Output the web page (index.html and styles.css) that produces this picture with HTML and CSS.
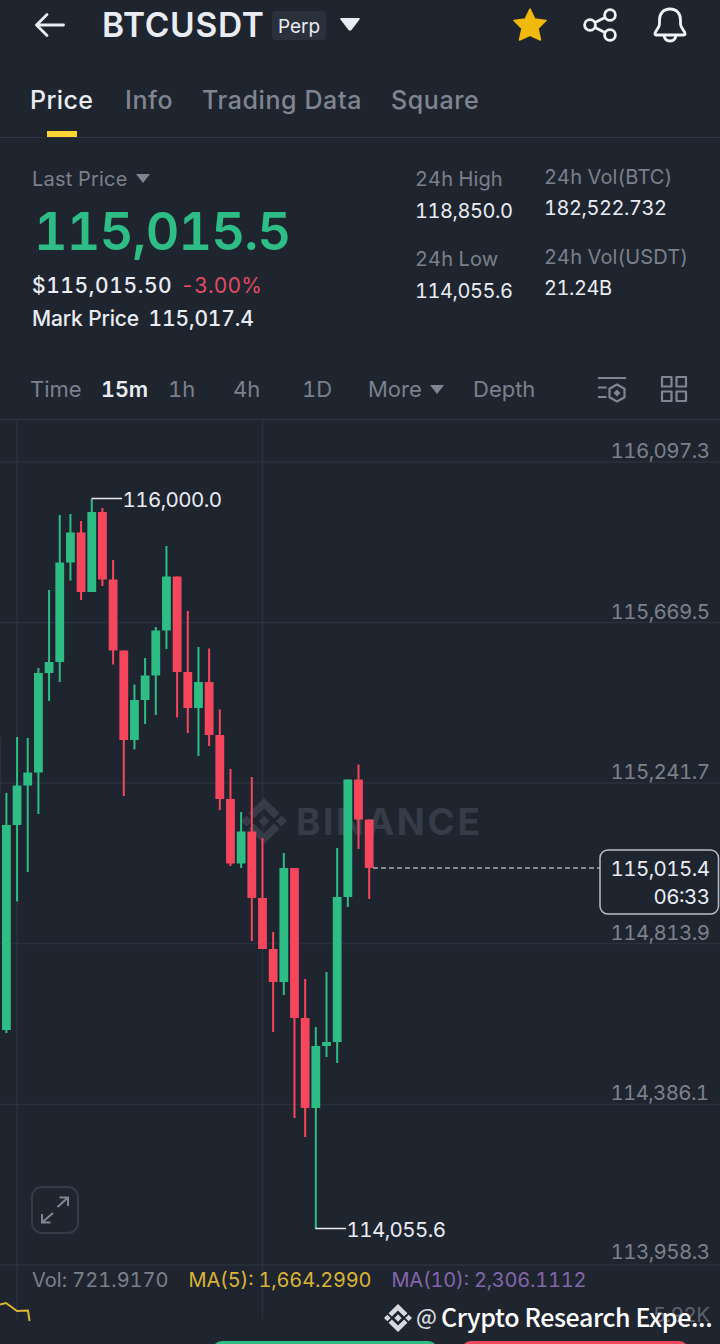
FILE: index.html
```html
<!DOCTYPE html>
<html lang="en">
<head>
    <meta charset="UTF-8">
    <meta name="viewport" content="width=device-width, initial-scale=1.0">
    <title>BTCUSDT Perp</title>
    <link rel="stylesheet" href="styles.css">
</head>
<body>
    <header class="header">
        <svg class="back" width="32" height="26" viewBox="0 0 32 26">
            <path d="M14 2.500 L3.500 13 L14 23.500 M3.500 13 H30.500" />
        </svg>
        <h1>BTCUSDT</h1>
        <span class="badge">Perp</span>
        <svg class="pair-arrow" width="22" height="14" viewBox="0 0 22 14">
            <path d="M2 0 H20 Q21.5 0 20.5 1.5 L12.5 12 Q11 13.5 9.500 12 L1.500 1.500 Q.5 0 2 0Z" />
        </svg>
        <div class="actions">
            <svg width="36" height="36" viewBox="0 0 36 36">
                <path class="star" d="M18 2 L22.800 12 L34 13.500 L26 21.500 L28.500 33 L18 28.200 L7.500 33 L10 21.500 L2 13.500 L13.200 12Z" />
            </svg>
            <svg class="line-icon" width="36" height="36" viewBox="0 0 36 36">
                <circle cx="8" cy="18" r="5.400" />
                <circle cx="28" cy="8" r="5.400" />
                <circle cx="28" cy="28" r="5.400" />
                <path d="M13 15.500 L23 10.500 M13 20.500 L23 25.500" />
            </svg>
            <svg class="line-icon" width="36" height="36" viewBox="0 0 36 36">
                <path d="M18 2 C11 2 7.500 7 7.500 13 V17 C7.500 21 3 23.500 3 27 Q3 28 4.500 28 H31.500 Q33 28 33 27 C33 23.500 28.500 21 28.500 17 V13 C28.500 7 25 2 18 2Z" />
                <path d="M12 28.500 Q13 34 18 34 Q23 34 24 28.500" />
            </svg>
        </div>
    </header>

    <nav class="tabs">
        <span class="tab active">Price</span>
        <span class="tab">Info</span>
        <span class="tab">Trading Data</span>
        <span class="tab">Square</span>
    </nav>

    <section class="summary">
        <div class="price">
            <div class="price-label">Last Price <i class="caret"></i></div>
            <div class="last">115,015.5</div>
            <div class="usd">$115,015.50 <span class="change">-3.00%</span></div>
            <div class="mark">Mark Price <span class="mark-value">115,017.4</span></div>
        </div>
        <dl class="stats">
            <dt>24h High</dt>
            <dd>118,850.0</dd>
            <dt>24h Low</dt>
            <dd>114,055.6</dd>
        </dl>
        <dl class="stats volume">
            <dt>24h Vol(BTC)</dt>
            <dd>182,522.732</dd>
            <dt>24h Vol(USDT)</dt>
            <dd>21.24B</dd>
        </dl>
    </section>

    <div class="intervals">
        <span>Time</span>
        <span class="selected">15m</span>
        <span>1h</span>
        <span>4h</span>
        <span>1D</span>
        <span class="more">More <i class="caret"></i></span>
        <span>Depth</span>
        <svg width="32" height="32" viewBox="0 0 32 32">
            <path d="M2 5 H30 M2 14.500 H10.500 M2 24 H10.500 M21 11.500 L28.500 15.800 V24.200 L21 28.500 L13.500 24.200 V15.800Z" />
            <path class="dot" d="M21 16.500 L24.500 20 L21 23.500 L17.500 20Z" />
        </svg>
        <svg width="32" height="32" viewBox="0 0 32 32">
            <path d="M4 4 H13.500 V13.500 H4Z M18.500 4 H28 V13.500 H18.500Z M4 18.500 H13.500 V28 H4Z M18.500 18.500 H28 V28 H18.500Z" />
        </svg>
    </div>

    <main class="chart">
        <svg width="720" height="924" viewBox="0 420 720 924">
            <g class="grid">
                <path d="M0 462 H720 M0 622.500 H720 M0 783 H720 M0 943.500 H720 M0 1104.500 H720 M0 1265 H720" />
                <path d="M17 420 V1319 M262.500 420 V1319 M.5 737 V793" />
            </g>
            <g class="brand">
                <path d="M264 798 L279.500 813 L274 818.500 L264 808.500 L254 818.500 L248.500 813Z" />
                <path d="M264 844 L279.500 829 L274 823.500 L264 833.500 L254 823.500 L248.500 829Z" />
                <path d="M264 815.500 L269.500 821 L264 826.500 L258.500 821Z M246.500 815.500 L252 821 L246.500 826.500 L241 821Z M281.500 815.500 L287 821 L281.500 826.500 L276 821Z" />
                <text x="296" y="835" textLength="184">BINANCE</text>
            </g>
            <g id="candles"></g>
            <path class="current" d="M373 868 H600" />
            <path class="pointer" d="M91.500 498.500 H122 M315.500 1228.500 H346" />
            <g class="extremes">
                <text x="122.500" y="507" textLength="99.500">116,000.0</text>
                <text x="346.500" y="1237" textLength="99.500">114,055.6</text>
            </g>
            <g class="axis">
                <text x="610.500" y="458" textLength="99.500">116,097.3</text>
                <text x="610.500" y="619" textLength="99.500">115,669.5</text>
                <text x="610.500" y="779" textLength="99.500">115,241.7</text>
                <text x="610.500" y="940" textLength="99.500">114,813.9</text>
                <text x="610.500" y="1100" textLength="98.500">114,386.1</text>
                <text x="610.500" y="1259" textLength="99.500">113,958.3</text>
                <text class="vol-max" x="653" y="1322" textLength="57">5.92K</text>
            </g>
            <rect class="tag" x="600" y="850" width="118.500" height="64" rx="8" />
            <g class="tag-text">
                <text x="610.500" y="876" textLength="99.500">115,015.4</text>
                <text x="653.500" y="904" textLength="56.500">06:33</text>
            </g>
            <g class="expand">
                <rect x="32" y="1187" width="46" height="46" rx="10" />
                <path d="M57.500 1207 L68 1197.500 M59.500 1197.500 H68 V1206 M53 1213 L42 1222.500 M42 1214 V1222.500 H50.500" />
            </g>
            <g class="indicators">
                <text class="vol" x="32" y="1287" textLength="136.500">Vol: 721.9170</text>
                <text class="ma5" x="188.500" y="1287" textLength="183">MA(5): 1,664.2990</text>
                <text class="ma10" x="391.500" y="1287" textLength="195">MA(10): 2,306.1112</text>
            </g>
            <path class="ma-line" d="M0 1304.500 L6 1303 L17 1311 L28 1310.500 L29.500 1321" />
            <rect class="buy" x="212" y="1341" width="226" height="40" rx="10" />
            <rect class="sell" x="461" y="1341" width="228" height="40" rx="10" />
        </svg>

        <div class="author">
            <svg width="28" height="28" viewBox="0 0 46 46">
                <path d="M23 0 L38.500 15 L33 20.500 L23 10.500 L13 20.500 L7.500 15Z M23 46 L38.500 31 L33 25.500 L23 35.500 L13 25.500 L7.500 31Z" />
                <path d="M23 17 L29 23 L23 29 L17 23Z M5.500 17.500 L11 23 L5.500 28.500 L0 23Z M40.500 17.500 L46 23 L40.500 28.500 L35 23Z" />
            </svg>
            <span class="at">@</span>
            <span class="name">Crypto Research Expe...</span>
        </div>
    </main>

    <script src="script.js"></script>
</body>
</html>
```
FILE: styles.css
```css
body {
    margin: 0;
    width: 720px;
    height: 1344px;
    overflow: hidden;
    background-color: #1f252f;
    color: #eaecf3;
    font-family: Inter, "Open Sans", sans-serif;
    font-size: 21px;
    font-variant-numeric: tabular-nums;
}

.header {
    display: flex;
    align-items: center;
    height: 50px;
    padding: 0 32px 0 33px;
}

.back {
    fill: none;
    stroke: #eaecf3;
    stroke-width: 2.800;
    stroke-linecap: round;
    stroke-linejoin: round;
}

h1 {
    width: 162px;
    margin: 0 8px 0 37px;
    font-size: 33.5px;
    font-weight: 600;
    line-height: 40px;
    letter-spacing: 0.7px;
    white-space: nowrap;
}

.badge {
    box-sizing: border-box;
    width: 54px;
    height: 29px;
    border-radius: 4px;
    background-color: #2a303c;
    font-size: 19px;
    line-height: 31px;
    text-align: center;
}

.pair-arrow {
    margin-left: 13px;
    fill: #eaecf3;
}

.actions {
    display: flex;
    gap: 34px;
    margin-left: auto;
}

.star {
    fill: #f0b90b;
    stroke: #f0b90b;
    stroke-width: 1.500;
    stroke-linejoin: round;
}

.line-icon {
    fill: none;
    stroke: #f2f3f7;
    stroke-width: 2.800;
    stroke-linejoin: round;
}

.tabs {
    display: grid;
    grid-template-columns: 95px 77px 189px 100px;
    height: 87px;
    padding-left: 30px;
    border-bottom: 1px solid #2d343f;
    color: #808591;
    font-size: 25px;
    font-weight: 500;
    line-height: 101px;
    letter-spacing: 0.6px;
    white-space: nowrap;
}

.tab.active {
    color: #eaecf3;
    letter-spacing: 0.4px;
}

.tab.active::after {
    content: "";
    display: block;
    width: 30px;
    height: 6px;
    margin: -20px 0 0 17px;
    background-color: #fcd535;
}

.summary {
    display: flex;
    height: 222px;
    white-space: nowrap;
}

.price {
    width: 383px;
    padding: 26px 0 0 32px;
}

.price-label {
    color: #7b808c;
    font-size: 20px;
    line-height: 30px;
    letter-spacing: 0.2px;
}

.caret {
    display: inline-block;
    margin-left: 2px;
    border: 7.500px solid transparent;
    border-top: 9px solid #808591;
    border-bottom: 0;
    vertical-align: 3px;
}

.price-label .caret {
    margin-left: 3px;
}

.last {
    padding-left: 2px;
    color: #2ebd85;
    font-size: 52px;
    font-weight: 600;
    line-height: 75px;
    letter-spacing: -0.8px;
}

.usd, .mark {
    font-weight: 500;
    line-height: 33px;
}

.usd {
    letter-spacing: 0.6px;
}

.mark {
    letter-spacing: -0.15px;
}

.change {
    margin-left: 2px;
    color: #e04b61;
    font-weight: 400;
    letter-spacing: 0.1px;
}

.mark-value {
    margin-left: 4px;
}

.stats {
    width: 129px;
    margin: 25px 0 0;
}

.volume {
    margin-top: 23px;
}

.stats dt {
    color: #7b808c;
    font-size: 20px;
    line-height: 32px;
    letter-spacing: 0.1px;
}

.stats dd {
    margin: 0 0 16px;
    font-size: 20px;
    line-height: 32px;
    letter-spacing: -0.45px;
}

.volume dd {
    margin-bottom: 17px;
    line-height: 31px;
}

.intervals {
    display: grid;
    grid-template-columns: 71px 67px 65px 69px 66px 105px 123px 62px 32px;
    align-items: center;
    height: 57px;
    padding: 0 0 2px 30px;
    border-bottom: 1px solid #2d343f;
    color: #7b808c;
    font-size: 22px;
    white-space: nowrap;
}

.intervals .selected {
    color: #eaecf3;
    font-size: 21.5px;
    font-weight: 600;
}

.intervals svg {
    fill: none;
    stroke: #808591;
    stroke-width: 2.200;
    stroke-linejoin: round;
}

.intervals .dot {
    fill: #808591;
    stroke: none;
}

.chart {
    position: relative;
    height: 924px;
}

.chart > svg {
    display: block;
}

.grid {
    fill: none;
    stroke: #2b313c;
    stroke-width: 1.500;
}

.brand {
    fill: #353c47;
    font-size: 37px;
    font-weight: 700;
}

.up {
    fill: #2ebd85;
}

.down {
    fill: #f6465d;
}

.current {
    stroke: #a7abb5;
    stroke-width: 1.500;
    stroke-dasharray: 5 3;
}

.pointer {
    fill: none;
    stroke: #eaecf3;
    stroke-width: 1.300;
}

.extremes, .axis, .tag-text {
    font-size: 20.5px;
}

.extremes, .tag-text {
    fill: #eaecf3;
}

.axis {
    fill: #7b808c;
}

.vol-max {
    fill: #5c626d;
}

.tag {
    fill: #1f252f;
    stroke: #b9bdc7;
    stroke-width: 1.500;
}

.expand {
    fill: none;
    stroke: #808591;
    stroke-width: 2;
}

.expand rect {
    fill: #1f252f;
    stroke: #343b46;
}

.indicators {
    font-size: 20px;
}

.vol {
    fill: #7b808c;
}

.ma5 {
    fill: #dcb436;
}

.ma10 {
    fill: #8466ad;
}

.ma-line {
    fill: none;
    stroke: #dcb436;
    stroke-width: 2;
}

.buy {
    fill: #2ebd85;
}

.sell {
    fill: #f0495f;
}

.author {
    position: absolute;
    left: 384px;
    bottom: 10px;
    display: flex;
    align-items: center;
    height: 32px;
    font-family: "Noto Sans CJK SC", sans-serif;
    font-weight: 500;
    line-height: 28px;
    white-space: nowrap;
}

.author svg {
    fill: #d7d9df;
}

.at {
    margin: -4px 0 0 4px;
    font-size: 21.5px;
    color: #d7d9df;
}

.name {
    margin: -4px 0 0 4px;
    color: #fff;
    font-size: 25px;
    letter-spacing: -0.38px;
}
```
FILE: script.js
```js
// x positions are 10.67px apart, each row is: direction, high, body top, body bottom, low
const candles = [
    ['up', 793, 825, 1030, 1033],
    ['up', 737, 785.5, 825, 901.5],
    ['up', 738, 772.5, 785.5, 872],
    ['up', 668, 673, 772.5, 814],
    ['up', 590, 662, 673, 701],
    ['up', 515, 562.5, 662, 682],
    ['up', 514, 532.5, 562.5, 580.5],
    ['down', 521, 532.5, 592, 600],
    ['up', 499, 512, 592, 592],
    ['down', 508, 512, 579.5, 586],
    ['down', 560, 579.5, 650.5, 664.5],
    ['down', 650.5, 650.5, 740, 796],
    ['up', 684.5, 700, 740, 749.5],
    ['up', 658, 675.5, 700, 724],
    ['up', 627, 630.5, 675.5, 715],
    ['up', 546, 576.5, 630.5, 649],
    ['down', 576.5, 576.5, 672, 717.5],
    ['down', 611, 672, 708, 733],
    ['up', 647, 682, 708, 756],
    ['down', 648.5, 682, 735, 746],
    ['down', 709.5, 735, 799, 810],
    ['down', 769, 799, 863.5, 866],
    ['up', 812, 831.5, 863.5, 868],
    ['down', 777, 831.5, 898, 941],
    ['down', 838, 898, 949, 949],
    ['down', 932, 949, 982, 1032],
    ['up', 853, 868, 982, 995],
    ['down', 868, 868, 1018, 1118],
    ['down', 979, 1018, 1108, 1137],
    ['up', 1027, 1046, 1108, 1229],
    ['up', 972, 1042, 1046, 1057],
    ['up', 848, 897, 1042, 1063],
    ['up', 779.5, 779.5, 897, 907],
    ['down', 764.5, 779.5, 819.5, 849],
    ['down', 819.5, 819.5, 868, 899]
];

function rect(group, dir, x, y, width, height) {
    const el = document.createElementNS('http://www.w3.org/2000/svg', 'rect');
    el.setAttribute('class', dir);
    el.setAttribute('x', x);
    el.setAttribute('y', y);
    el.setAttribute('width', width);
    el.setAttribute('height', height);
    group.appendChild(el);
}

const group = document.querySelector('#candles');
candles.forEach(([dir, high, top, bottom, low], i) => {
    const x = 6.4 + i * 10.67;
    rect(group, dir, x - 1, high, 2, low - high);
    rect(group, dir, x - 4.4, top, 8.8, bottom - top);
});
```
